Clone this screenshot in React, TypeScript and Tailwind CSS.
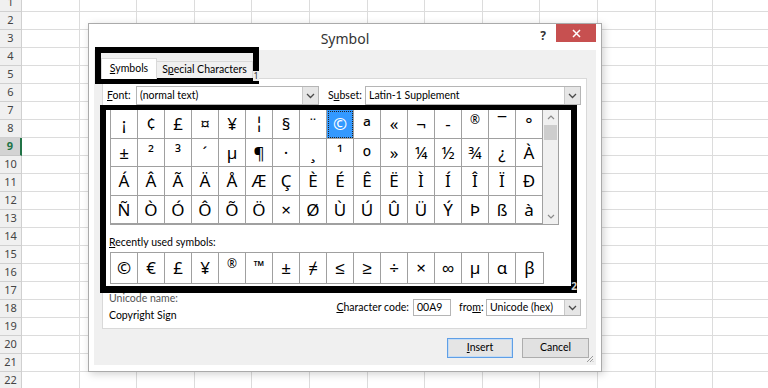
import React from "react";

const rows = Array.from({ length: 22 }, (_, i) => i + 1);
const cols = Array.from({ length: 13 }, (_, i) => i);

const grid: string[][] = [
  ["¡", "¢", "£", "¤", "¥", "¦", "§", "¨", "©", "ª", "«", "¬", "-", "®", "¯", "°"],
  ["±", "²", "³", "´", "µ", "¶", "·", "¸", "¹", "º", "»", "¼", "½", "¾", "¿", "À"],
  ["Á", "Â", "Ã", "Ä", "Å", "Æ", "Ç", "È", "É", "Ê", "Ë", "Ì", "Í", "Î", "Ï", "Ð"],
  ["Ñ", "Ò", "Ó", "Ô", "Õ", "Ö", "×", "Ø", "Ù", "Ú", "Û", "Ü", "Ý", "Þ", "ß", "à"],
];

const recent = ["©", "€", "£", "¥", "®", "™", "±", "≠", "≤", "≥", "÷", "×", "∞", "µ", "α", "β"];

function Glyph({ ch }: { ch: string }) {
  if (ch === "®") return <span className="text-[12px] -translate-y-[4px]">®</span>;
  if (ch === "™") return <span className="text-[14px] font-bold -translate-y-[3px]">™</span>;
  if (ch === "ª" || ch === "º") return <span className="text-[22px] translate-y-[3px]">{ch}</span>;
  if (ch === "¦") return <span className="font-['DejaVu_Sans',sans-serif] text-black">¦</span>;
  return <span>{ch}</span>;
}

function Chev() {
  return (
    <svg width="9" height="6" viewBox="0 0 9 6">
      <path d="M1 1l3.5 3.5L8 1" stroke="#4a4a4a" strokeWidth="1.3" fill="none" />
    </svg>
  );
}

function Combo({ w, h, text }: { w: string; h: string; text: string }) {
  return (
    <div className={`flex border border-[#b5b5b5] bg-white ${w} ${h}`}>
      <div className="flex-1 pl-[3px] flex items-center whitespace-nowrap overflow-hidden">{text}</div>
      <div className="w-[16px] flex items-center justify-center bg-[#e6e6e6] border-l border-[#c8c8c8]">
        <Chev />
      </div>
    </div>
  );
}

function Sheet() {
  return (
    <div className="flex flex-col -mt-[6px]">
      {rows.map((n) => (
        <div key={n} className="flex h-[18px] shrink-0">
          <div
            className={
              n === 9
                ? "w-[22px] shrink-0 bg-[#d3d3d3] border-b border-[#c6c6c6] border-r-2 border-r-[#217346] flex items-center justify-center text-[11px] font-bold text-[#217346] font-['Noto_Sans',sans-serif]"
                : "w-[22px] shrink-0 bg-[#f0f0f0] border-b border-r border-[#d0d0d0] flex items-center justify-center text-[11px] text-[#444] font-['Noto_Sans',sans-serif]"
            }
          >
            {n}
          </div>
          {cols.map((c) => (
            <div key={c} className="w-[57.6px] shrink-0 border-r border-b border-[#dcdcdc]" />
          ))}
        </div>
      ))}
    </div>
  );
}

function Dialog() {
  return (
    <div className="absolute left-[88px] top-[23px] w-[514px] h-[349px] bg-white border border-[#aaaaaa] shadow-[2px_2px_8px_rgba(0,0,0,0.18)] flex flex-col font-['Lato',sans-serif] text-[10.5px] text-black">
      <div className="h-[26px] shrink-0 grid grid-cols-[1fr_auto_1fr]">
        <div />
        <div className="text-[14px] leading-[19px] text-[#333] pt-[5px] font-['Noto_Sans',sans-serif]">Symbol</div>
        <div className="flex justify-end items-start pr-[5px]">
          <span className="text-[12px] leading-[14px] font-bold text-[#333] mt-[5px] mr-[10px] font-['Noto_Sans',sans-serif]">?</span>
          <div className="w-[40px] h-[18px] bg-[#c75050] flex items-center justify-center">
            <svg width="9" height="9" viewBox="0 0 9 9">
              <path d="M1 1l7 7M8 1l-7 7" stroke="#fff" strokeWidth="1.5" />
            </svg>
          </div>
        </div>
      </div>

      <div className="relative mx-[5px] mb-[6px] flex-1 bg-[#f0f0f0] flex flex-col">
        <div className="flex items-end pl-[7px] pt-[8px] relative z-10 -mb-px">
          <div className="w-[56px] h-[21px] bg-white border border-b-0 border-[#d9d9d9] flex items-center justify-center">
            <span>
              <u>S</u>ymbols
            </span>
          </div>
          <div className="w-[97px] h-[17px] mb-px -ml-px bg-[#f0f0f0] border border-b-0 border-[#d9d9d9] flex items-center justify-center whitespace-nowrap">
            <span>
              S<u>p</u>ecial Characters
            </span>
          </div>
        </div>

        <div className="ml-[8px] w-[485px] h-[251px] bg-white border border-[#d9d9d9] flex flex-col">
          <div className="mt-[7px] flex items-center h-[19px] pl-[4px]">
            <span className="w-[29px]">
              <u>F</u>ont:
            </span>
            <Combo w="w-[183px]" h="h-[19px]" text="(normal text)" />
            <span className="ml-[9px] w-[37px]">
              S<u>u</u>bset:
            </span>
            <Combo w="w-[216px]" h="h-[19px]" text="Latin-1 Supplement" />
          </div>

          <div className="mt-[4px] ml-[7px] w-fit flex border border-[#a0a0a0] font-['Noto_Sans',sans-serif] text-[17px]">
            <div className="grid grid-cols-[repeat(16,27px)]">
              {grid.flatMap((r, ri) =>
                r.map((ch, ci) => (
                  <div
                    key={`${ri}-${ci}`}
                    className={
                      ri === 0 && ci === 8
                        ? "h-[28.5px] border-r border-b border-[#a0a0a0] bg-[#3399ff] text-white flex items-center justify-center outline-1 outline-dotted outline-[#222] -outline-offset-2"
                        : "h-[28.5px] border-r border-b border-[#a0a0a0] flex items-center justify-center"
                    }
                  >
                    <Glyph ch={ch} />
                  </div>
                ))
              )}
            </div>
            <div className="w-[15px] bg-[#f0f0f0] flex flex-col items-center">
              <div className="h-[15px] flex items-center justify-center">
                <svg width="8" height="5" viewBox="0 0 8 5">
                  <path d="M1 4l3-3 3 3" stroke="#8a8a8a" strokeWidth="1.2" fill="none" />
                </svg>
              </div>
              <div className="w-[13px] h-[15px] bg-[#cdcdcd]" />
              <div className="flex-1" />
              <div className="h-[15px] flex items-center justify-center">
                <svg width="8" height="5" viewBox="0 0 8 5">
                  <path d="M1 1l3 3 3-3" stroke="#8a8a8a" strokeWidth="1.2" fill="none" />
                </svg>
              </div>
            </div>
          </div>

          <div className="mt-[11px] pl-[6px] leading-[13px]">
            <u>R</u>ecently used symbols:
          </div>
          <div className="mt-[3px] ml-[7px] w-fit flex border border-[#a0a0a0] font-['Noto_Sans',sans-serif] text-[17px]">
            {recent.map((ch, i) => (
              <div
                key={i}
                className="w-[27px] h-[30px] border-r border-[#a0a0a0] last:border-r-0 flex items-center justify-center"
              >
                <Glyph ch={ch} />
              </div>
            ))}
          </div>

          <div className="mt-[6px] flex">
            <div className="pl-[6px] flex flex-col">
              <span className="leading-[17px] text-[#555]">Unicode name:</span>
              <span className="leading-[17px]">Copyright Sign</span>
            </div>
            <div className="ml-auto pr-[5px] mt-[9px] flex items-center h-[17px]">
              <span>
                <u>C</u>haracter code:
              </span>
              <div className="ml-[4px] w-[38px] h-[17px] border border-[#b5b5b5] bg-white pl-[3px] flex items-center">
                00A9
              </div>
              <span className="ml-[8px] w-[27px]">
                fro<u>m</u>:
              </span>
              <Combo w="w-[95px]" h="h-[17px]" text="Unicode (hex)" />
            </div>
          </div>
        </div>

        <div className="mt-[9px] flex justify-end gap-[9px] pr-[7px]">
          <div className="w-[66px] h-[20px] bg-[#e5e5e5] border border-[#5f9fe6] shadow-[inset_0_0_0_1px_#c4dcf5] flex items-center justify-center">
            <span>
              <u>I</u>nsert
            </span>
          </div>
          <div className="w-[67px] h-[20px] bg-[#e1e1e1] border border-[#adadad] flex items-center justify-center">
            Cancel
          </div>
        </div>

        <div className="absolute right-[2px] bottom-[2px]">
          <svg width="8" height="8" viewBox="0 0 8 8">
            <path d="M7 1L1 7M7 4L4 7M7 6.5L6.5 7" stroke="#9a9a9a" strokeWidth="1" />
          </svg>
        </div>
      </div>
    </div>
  );
}

export default function App() {
  return (
    <div className="relative w-[768px] h-[388px] overflow-hidden bg-white">
      <Sheet />
      <Dialog />
      <div className="absolute left-[95px] top-[47px] w-[164px] h-[37px] border-[6px] border-black pointer-events-none">
        <span className="absolute right-[-6px] bottom-[-3px] w-[6px] h-[10px] bg-[#ececec] text-[9px] leading-[10px] text-center text-[#333] font-['Noto_Sans',sans-serif]">
          1
        </span>
      </div>
      <div className="absolute left-[100px] top-[105px] w-[477px] h-[188px] border-black border-t-[5px] border-l-[6px] border-r-[6px] border-b-[7px] pointer-events-none">
        <span className="absolute right-[-6px] bottom-[-5px] w-[6px] h-[10px] text-[10px] leading-[10px] font-bold text-center text-[#d0d0d0] font-['Noto_Sans',sans-serif]">
          2
        </span>
      </div>
    </div>
  );
}
